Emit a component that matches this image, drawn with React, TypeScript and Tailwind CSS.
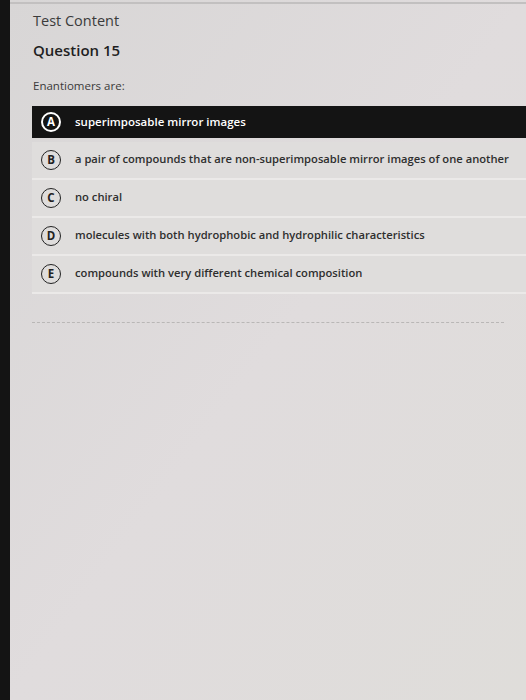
import React from "react";

const options = [
  { l: "A", t: "superimposable mirror images", sel: true },
  { l: "B", t: "a pair of compounds that are non-superimposable mirror images of one another" },
  { l: "C", t: "no chiral" },
  { l: "D", t: "molecules with both hydrophobic and hydrophilic characteristics" },
  { l: "E", t: "compounds with very different chemical composition" },
];

export default function App() {
  const [first, ...rest] = options;
  return (
    <div className="flex h-[700px] w-[526px] overflow-hidden bg-[#111] font-['Open_Sans',sans-serif]">
      <div className="w-[10px] shrink-0 bg-[#141414]" />
      <div className="flex flex-1 flex-col bg-gradient-to-br from-[#d8d6d6] via-[#e0dcdd] to-[#dfddda]">
        <div className="mt-[2px] h-[2px] bg-[#c2c0c0]" />
        <div className="pl-[23px] pt-[6px] text-[14.5px] text-[#3b3b3b]">Test Content</div>
        <div className="pl-[23px] pt-[7px] text-[15px] font-semibold text-[#1f1f1f]">Question 15</div>
        <div className="pl-[23px] pt-[16px] text-[11.5px] text-[#3a3a3a]">Enantiomers are:</div>
        <div className="mt-[11px] flex flex-col pl-[22px]">
          <div className="flex h-[32px] items-center gap-[14px] bg-[#141414] pl-[9px] text-white">
            <span className="flex h-[20px] w-[20px] items-center justify-center rounded-full border-2 border-white text-[11.5px] font-bold">{first.l}</span>
            <span className="text-[11.5px] font-semibold">{first.t}</span>
          </div>
          <div className="mt-[4px] flex flex-col">
            {rest.map((o) => (
              <div key={o.l} className="flex h-[38px] items-center gap-[14px] border-b-2 border-[#ebe9e8] bg-[#dfdddc] pl-[9px] text-[#222]">
                <span className="flex h-[20px] w-[20px] items-center justify-center rounded-full border-[1.5px] border-[#222] text-[11.5px] font-bold">{o.l}</span>
                <span className="text-[11.2px] font-semibold text-[#2e2e2e]">{o.t}</span>
              </div>
            ))}
          </div>
        </div>
        <div className="mx-[22px] mt-[28px] border-t border-dashed border-[#b9b7b6]" />
        <div className="flex-1" />
      </div>
    </div>
  );
}
